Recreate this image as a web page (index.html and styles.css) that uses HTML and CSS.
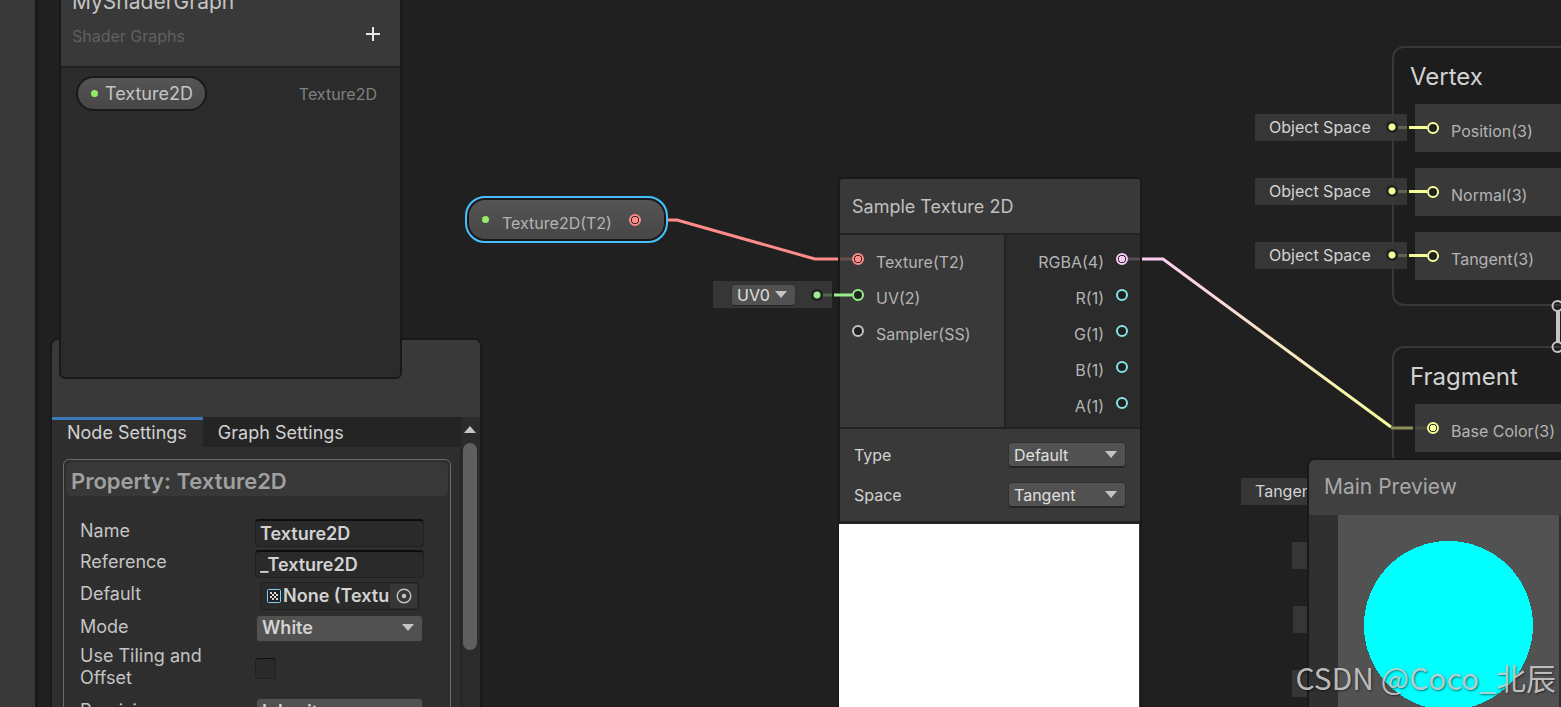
FILE: index.html
```html
<!DOCTYPE html>
<html lang="en">
<head>
<meta charset="utf-8">
<title>MyShaderGraph</title>
<link rel="stylesheet" href="styles.css">
</head>
<body>
<main class="canvas">
  <aside class="dock"></aside>

  <section class="stack stack-vertex">
    <h2 class="stack-title">Vertex</h2>
    <div class="block"><i class="port yellow"></i><span class="port-label">Position(3)</span></div>
    <div class="block"><i class="port yellow"></i><span class="port-label">Normal(3)</span></div>
    <div class="block"><i class="port yellow"></i><span class="port-label">Tangent(3)</span></div>
  </section>
  <section class="stack stack-fragment">
    <h2 class="stack-title">Fragment</h2>
    <div class="block"><i class="port yellow on"></i><span class="port-label">Base Color(3)</span></div>
  </section>

  <div class="tag tag-position">Object Space<i class="dot yellow"></i></div>
  <div class="tag tag-normal">Object Space<i class="dot yellow"></i></div>
  <div class="tag tag-tangent">Object Space<i class="dot yellow"></i></div>
  <div class="tag tag-space">Tangent</div>
  <div class="tag tag-value-a"></div>
  <div class="tag tag-value-b"></div>
  <div class="tag tag-value-c"></div>

  <div class="tag tag-uv">
    <label class="select uv-select"><select aria-label="UV channel"><option>UV0</option></select><i class="arrow"></i></label>
    <i class="dot green"></i>
  </div>

  <div class="token">
    <i class="bullet"></i><span class="token-name">Texture2D(T2)</span><i class="port red on"></i>
  </div>

  <article class="node">
    <h2 class="node-title">Sample Texture 2D</h2>
    <div class="node-ports">
      <ul class="inputs">
        <li><i class="port red on"></i><span class="port-label">Texture(T2)</span></li>
        <li><i class="port green"></i><span class="port-label">UV(2)</span></li>
        <li><i class="port grey"></i><span class="port-label">Sampler(SS)</span></li>
      </ul>
      <ul class="outputs">
        <li><span class="port-label">RGBA(4)</span><i class="port pink on"></i></li>
        <li><span class="port-label">R(1)</span><i class="port cyan"></i></li>
        <li><span class="port-label">G(1)</span><i class="port cyan"></i></li>
        <li><span class="port-label">B(1)</span><i class="port cyan"></i></li>
        <li><span class="port-label">A(1)</span><i class="port cyan"></i></li>
      </ul>
    </div>
    <div class="node-controls">
      <label for="type">Type</label>
      <span class="select"><select id="type"><option>Default</option></select><i class="arrow"></i></span>
      <label for="space">Space</label>
      <span class="select"><select id="space"><option>Tangent</option></select><i class="arrow"></i></span>
    </div>
    <div class="node-preview"></div>
  </article>

  <svg class="edges" aria-hidden="true">
    <defs>
      <linearGradient id="pinkToYellow" gradientUnits="userSpaceOnUse" x1="1142" y1="259" x2="1391" y2="428">
        <stop offset="0" stop-color="#fbcbf4"/><stop offset="1" stop-color="#f6ff9a"/>
      </linearGradient>
    </defs>
    <g fill="none" stroke-width="3">
      <path d="M668 220H677L815 259H838" stroke="#ff8b8b"/>
      <path d="M840 259H852" stroke="#6b4d4d"/>
      <path d="M834 295H852" stroke="#9bee8e"/>
      <path d="M823 295H832" stroke="#4f6a4b"/>
      <path d="M1128 259H1140" stroke="#584d57"/>
      <path d="M1142 259H1163L1391 427" stroke="url(#pinkToYellow)"/>
      <path d="M1391 428H1413" stroke="#8c9058"/>
      <path d="M1415 428H1427" stroke="#4b4d3d"/>
      <path d="M1409 127.500H1427M1409 191.500H1427M1409 255.500H1427" stroke="#f6ff9a"/>
      <path d="M1398 127.500H1407M1398 191.500H1407M1398 255.500H1407" stroke="#62644c"/>
      <path d="M1558 311V342" stroke="#c4c4c4" stroke-width="4"/>
      <circle cx="1557.500" cy="306" r="5" stroke="#c4c4c4" stroke-width="2"/>
      <circle cx="1557.500" cy="347" r="5" stroke="#c4c4c4" stroke-width="2"/>
    </g>
  </svg>

  <section class="inspector">
    <div class="inspector-head"></div>
    <div class="inspector-body">
      <div class="inspector-main">
        <nav class="tabs">
          <button class="tab active" type="button">Node Settings</button>
          <button class="tab" type="button">Graph Settings</button>
        </nav>
        <div class="property">
          <h3 class="property-title">Property: Texture2D</h3>
          <div class="fields">
            <label for="name">Name</label>
            <input class="text" id="name" value="Texture2D">
            <label for="reference">Reference</label>
            <input class="text" id="reference" value="_Texture2D">
            <label for="default">Default</label>
            <div class="object">
              <svg class="texture-icon" viewBox="0 0 14 14" aria-hidden="true">
                <rect x="0.500" y="0.500" width="13" height="13" rx="1" fill="#222" stroke="#7fd0f7"/>
                <path fill="#d8d8d8" d="M3 3h2v2H3zM7 3h2v2H7zM5 5h2v2H5zM9 5h2v2H9zM3 7h2v2H3zM7 7h2v2H7zM5 9h2v2H5zM9 9h2v2H9z"/>
              </svg>
              <input id="default" value="None (Texture2D)" readonly>
              <button class="picker" type="button" aria-label="Select texture">
                <svg viewBox="0 0 16 16"><circle cx="8" cy="8" r="6.800" fill="none" stroke="#c4c4c4" stroke-width="1.400"/><circle cx="8" cy="8" r="2.200" fill="#c4c4c4"/></svg>
              </button>
            </div>
            <label for="mode">Mode</label>
            <span class="select"><select id="mode"><option>White</option></select><i class="arrow"></i></span>
            <label for="tiling">Use Tiling and Offset</label>
            <input class="check" id="tiling" type="checkbox">
            <label for="precision">Precision</label>
            <span class="select"><select id="precision"><option>Inherit</option></select><i class="arrow"></i></span>
          </div>
        </div>
      </div>
      <div class="scrollbar"><i class="arrow up"></i><i class="thumb"></i></div>
    </div>
  </section>

  <section class="blackboard">
    <header class="board-head">
      <div>
        <h1 class="board-title">MyShaderGraph</h1>
        <p class="board-sub">Shader Graphs</p>
      </div>
      <button class="add" type="button" aria-label="Add property">
        <svg viewBox="0 0 14 14"><path d="M7 0V14M0 7H14" stroke="#e6e6e6" stroke-width="2"/></svg>
      </button>
    </header>
    <div class="board-row">
      <span class="pill"><i class="bullet"></i>Texture2D</span>
      <span class="board-type">Texture2D</span>
    </div>
  </section>

  <section class="preview">
    <h2 class="preview-title">Main Preview</h2>
    <div class="preview-image">
      <svg viewBox="0 0 221 221"><circle cx="110.500" cy="110.500" r="84.500" fill="#0ff" shape-rendering="crispEdges"/></svg>
    </div>
  </section>

  <p class="watermark">CSDN @Coco_北辰</p>
</main>
</body>
</html>
```
FILE: styles.css
```css
* { box-sizing: border-box; }
body { margin: 0; font-family: Inter, "Noto Sans CJK SC", sans-serif; font-size: 16px; line-height: 20px; color: #c4c4c4; background: #202020; }
h1, h2, h3, p, ul { margin: 0; padding: 0; font-weight: 400; list-style: none; }
button, input, select { margin: 0; padding: 0; border: 0; border-radius: 0; background: none; color: inherit; font: inherit; outline: 0; appearance: none; }
svg { display: block; }

.canvas { position: relative; height: 100vh; overflow: hidden; background: #202020; }
.dock { width: 38px; height: 100%; background: #383838; border-right: 3px solid #191919; }

/* ports and markers */
.port { flex: none; width: 12px; height: 12px; border: 2px solid; border-radius: 50%; background: #202020; }
.port.on { background: radial-gradient(circle, currentColor 3px, #202020 3px); }
.port-label { padding-top: 6px; color: #b4b4b4; white-space: nowrap; }
.red { color: #ff8b8b; }
.green { color: #9bee8e; }
.grey { color: #c4c4c4; }
.pink { color: #fbcbf4; }
.cyan { color: #84e4e7; }
.yellow { color: #f6ff9a; }
.bullet { flex: none; width: 7px; height: 7px; border-radius: 50%; background: #96ea66; }
.dot { flex: none; width: 12px; height: 12px; border-radius: 50%; background: radial-gradient(circle, currentColor 3px, #202020 4px); }
.arrow { width: 0; height: 0; border: solid transparent; border-width: 7px 6px 0; border-top-color: #c4c4c4; }
.arrow.up { border-width: 0 6px 7px; border-bottom-color: #c4c4c4; }

.select { position: relative; display: block; height: 26px; border: 1px solid #303030; border-bottom: 2px solid #242424; border-radius: 4px; background: #515151; color: #e0e0e0; }
.select select { width: 100%; height: 100%; padding-left: 5px; }
.select .arrow { position: absolute; right: 8px; top: 8px; pointer-events: none; }

/* graph elements placed on the canvas */
.token, .node, .tag, .stack, .edges, .inspector, .blackboard, .preview, .watermark { position: absolute; }
.edges { left: 0; top: 0; width: 100%; height: 100%; pointer-events: none; }

.token { left: 465px; top: 196px; height: 47px; display: flex; align-items: center; padding: 0 25px 0 15px; border: 2px solid #44c0ff; border-radius: 20px; background: linear-gradient(#555, #464646); box-shadow: inset 0 0 0 2px #191919; width: 203px; }
.token-name { flex: 1; padding: 6px 0 0 13px; color: #b4b4b4; }

.tag { height: 27px; display: flex; align-items: center; background: #383838e8; color: #d2d2d2; white-space: nowrap; padding: 0 0 1px 14px; }
.tag .dot { margin-left: auto; margin-right: 9px; }
.tag-position, .tag-normal, .tag-tangent { left: 1255px; width: 152px; }
.tag-position { top: 114px; }
.tag-normal { top: 178px; }
.tag-tangent { top: 242px; }
.tag-space { left: 1241px; top: 478px; width: 166px; }
.tag-value-a { left: 1292px; top: 542px; width: 115px; }
.tag-value-b { left: 1293px; top: 606px; width: 115px; }
.tag-value-c { left: 1292px; top: 670px; width: 115px; }
.tag-uv { left: 713px; top: 281px; width: 119px; padding: 0 0 0 18px; }
.uv-select { width: 65px; height: 22px; border-width: 1px; }
.uv-select .arrow { top: 6px; }

.node { left: 838px; top: 177px; width: 304px; border: 2px solid #1a1a1a; border-radius: 4px; background: #393939; }
.node-title { height: 56px; padding: 0 12px; border-bottom: 2px solid #232323; font-size: 18px; line-height: 55px; color: #c0c0c0; }
.node-ports { display: flex; border-bottom: 2px solid #232323; }
.inputs { flex: 1; padding: 6px 12px; }
.outputs { width: 136px; padding: 6px 12px; border-left: 2px solid #232323; background: #2b2b2b; }
.node-ports li { height: 36px; display: flex; align-items: center; gap: 12px; }
.outputs li { justify-content: flex-end; }
.node-controls { display: grid; grid-template-columns: 1fr 118px; gap: 14px; align-items: center; padding: 13px 14px; border-bottom: 3px solid #232323; color: #d2d2d2; }
.node-preview { height: 300px; margin: 0 1px 0 -1px; background: #fff; }

.stack { left: 1392px; width: 340px; padding: 0 20px 24px 21px; border: 2px solid #383838; border-radius: 12px; background: #1d1d1d; }
.stack-vertex { top: 46px; }
.stack-fragment { top: 346px; }
.stack-title { margin-left: -5px; padding: 14px 0 12px; font-size: 24px; line-height: 30px; color: #d2d2d2; }
.block { height: 48px; display: flex; align-items: center; gap: 12px; padding-left: 12px; background: #393939; }
.block + .block { margin-top: 16px; }

/* blackboard */
.blackboard { left: 59px; top: -22px; width: 343px; height: 401px; border: 2px solid #191919; border-radius: 6px; background: #2b2b2b; }
.board-head { height: 88px; display: flex; justify-content: space-between; padding: 9px 20px 0 11px; border-bottom: 2px solid #212121; background: #393939; }
.board-title { font-size: 21px; line-height: 26px; color: #c4c4c4; }
.board-sub { padding-top: 11px; color: #606060; }
.add { width: 14px; height: 14px; margin-top: 38px; }
.board-row { display: flex; align-items: center; justify-content: space-between; padding: 8px 23px 0 15px; }
.pill { height: 35px; display: flex; align-items: center; gap: 7px; padding: 0 12px 0 13px; border: 2px solid #191919; border-radius: 18px; background: linear-gradient(#555, #464646); font-size: 18px; }
.board-type { color: #808080; }

/* inspector */
.inspector { left: 50px; top: 338px; width: 432px; height: 520px; border: 2px solid #191919; border-radius: 8px; background: #2e2e2e; overflow: hidden; }
.inspector-head { height: 77px; background: #393939; }
.inspector-body { display: flex; }
.inspector-main { flex: 1; }
.tabs { display: flex; height: 30px; background: #242424; }
.tab { padding: 0 16px 2px 15px; border-top: 3px solid transparent; font-size: 18px; color: #d2d2d2; }
.tab.active { border-color: #3a79bb; background: #2e2e2e; }
.scrollbar { width: 20px; height: 400px; display: flex; flex-direction: column; align-items: center; gap: 10px; padding: 9px 2px 0 0; border-left: 2px solid #262626; background: #2b2b2b; }
.thumb { width: 14px; height: 207px; border-radius: 7px; background: #5f5f5f; }
.property { margin: 12px 9px 0 11px; padding: 2px; border: 1px solid #6a6a6a; border-radius: 6px; }
.property-title { height: 34px; padding-left: 5px; border-radius: 6px; background: #383838; font-size: 22px; font-weight: 600; line-height: 39px; color: #a0a0a0; }
.fields { display: grid; grid-template-columns: 175px 169px; grid-template-rows: 31px 31px 33px 33px 47px 40px; align-items: center; padding: 21px 0 20px 14px; font-size: 18px; line-height: 22px; }
.fields label { padding: 0 40px 3px 0; }
.text, .object input, .fields select { font-weight: 600; color: #d2d2d2; }
.text { width: 100%; height: 28px; padding-left: 4px; border: 1px solid #212121; border-top: 2px solid #0d0d0d; border-radius: 4px; background: #2a2a2a; }
.object { height: 28px; margin: 0 5px; display: flex; align-items: center; padding: 1px 1px 1px 6px; border: 1px solid #212121; border-radius: 4px; background: #2a2a2a; }
.object input { flex: 1; min-width: 0; padding-left: 2px; }
.texture-icon { flex: none; width: 14px; height: 14px; }
.picker { width: 27px; height: 24px; padding: 4px 6px; background: #373737; }
.picker svg { width: 16px; height: 16px; }
.fields .select { margin: 0 1px; height: 28px; border-color: #303030; }
.check { width: 21px; height: 21px; border: 1px solid #212121; border-top-color: #0d0d0d; border-radius: 3px; background: #2a2a2a; }

/* main preview */
.preview { left: 1307px; top: 458px; width: 283px; height: 300px; border: 2px solid #191919; border-radius: 8px; background: #303030; overflow: hidden; }
.preview-title { height: 55px; padding-left: 15px; background: #404040; font-size: 21px; line-height: 54px; color: #a8a8a8; }
.preview-image { width: 221px; margin-left: 29px; background: #525252; }

.watermark { right: 5px; bottom: 10px; font-family: "Noto Sans CJK SC", sans-serif; font-weight: 400; font-size: 30px; line-height: 40px; color: #d4d4d4dd; text-shadow: 1px 1px 2px #0008; white-space: nowrap; }
```
